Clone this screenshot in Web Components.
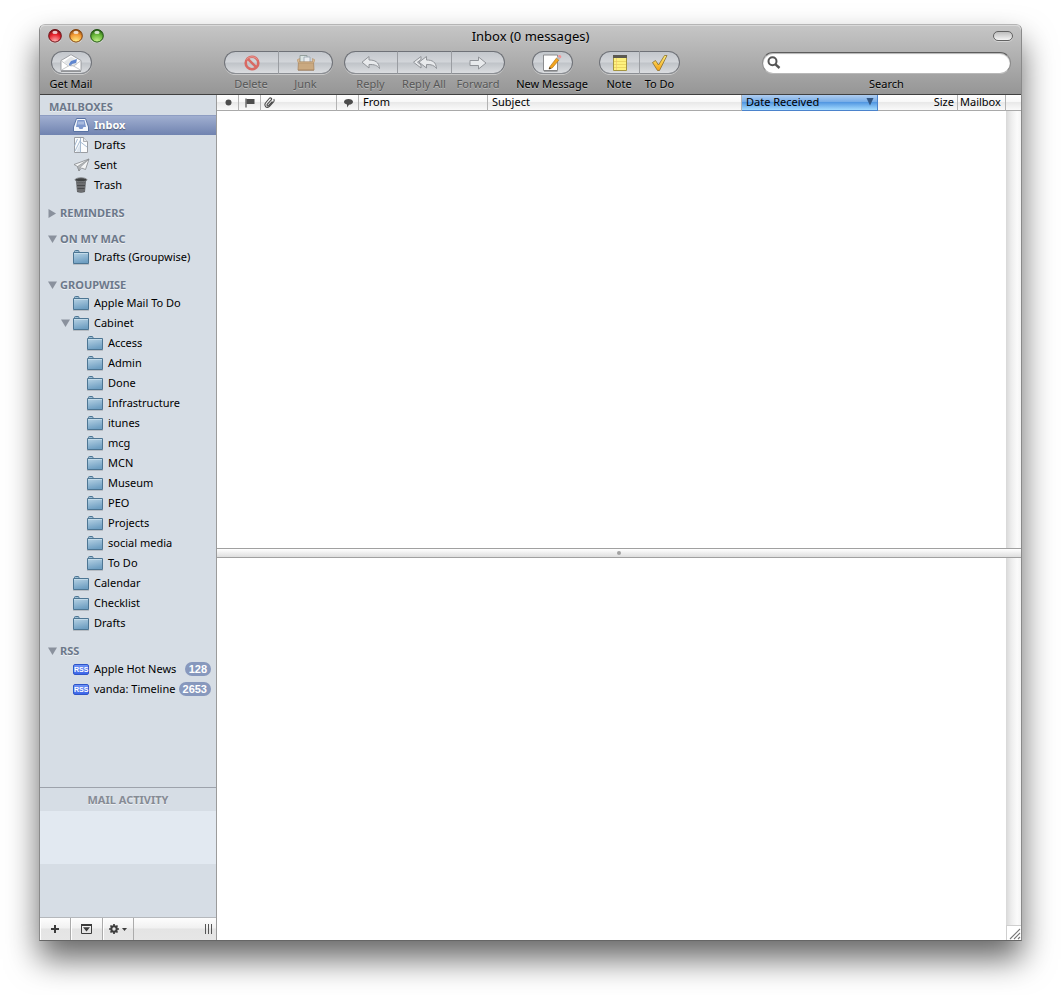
<!DOCTYPE html>
<html lang="en">
<head>
<meta charset="utf-8">
<meta name="viewport" content="width=device-width, initial-scale=1">
<title>Inbox (0 messages)</title>
<style>
  body { margin: 0; background: #fff; color: #000; font: 11px/20px "Noto Sans", "Open Sans", sans-serif; }
</style>
</head>
<body>
<mail-app></mail-app>

<script>
const folder = `<svg width="16" height="16" viewBox="0 0 16 16"><defs><linearGradient id="g" x1="0" y1="0" x2=".3" y2="1"><stop offset="0" stop-color="#b9d4e6"/><stop offset="1" stop-color="#6f9fc2"/></linearGradient></defs><path d="M0 15.5h16" stroke="#000" stroke-opacity=".14"/><path d="M1.500 3.500v-1q0-1 1-1h2.500q1 0 1 1v1" fill="#9dbfd6" stroke="#4c7593"/><path d="M.5 3.500h15v11H.5z" fill="url(#g)" stroke="#4c7593"/><path d="M1 4.500h14" stroke="#cfe2ee" stroke-opacity=".7"/></svg>`;
const light = (a, b, c) => `<svg width="14" height="14" viewBox="0 0 14 14"><defs><radialGradient id="r" cx=".5" cy=".95" r=".95"><stop offset="0" stop-color="${a}"/><stop offset=".6" stop-color="${b}"/><stop offset="1" stop-color="${c}"/></radialGradient></defs><path d="M1.500 11.500a7 6 0 0 0 11 0" stroke="#fff" stroke-opacity=".5" fill="none"/><circle cx="7" cy="6.800" r="6.300" fill="url(#r)" stroke="${c}" stroke-width="1"/><ellipse cx="7" cy="3.400" rx="2.600" ry="1.700" fill="#fff" fill-opacity=".75"/></svg>`;

const ICONS = {
  folder,
  close: light('#ffb8b8', '#e8222c', '#6b1015'),
  minimize: light('#fff08a', '#f39a35', '#80400c'),
  zoom: light('#c8f590', '#66b538', '#1e5210'),
  mail: `<svg width="22" height="18" viewBox="0 0 22 18"><path d="M1 17.300h20" stroke="#000" stroke-opacity=".4"/><path d="M1 6.500 10.500 1h1L21 6.500V16.500H1z" fill="#fff" stroke="#8e9196" stroke-width=".8"/><path d="M4 8 11 2.500 17 6v5l-6 2z" fill="#e4e6e8"/><path d="m9 10 2-3 6-2-1 4-4 1-1 2-2 0z" fill="#5f86cf"/><path d="M1.500 7 8.500 12 1.500 16M20.500 7l-7 5 7 4M8.500 12l2.500-1 2.500 1" fill="none" stroke="#b7babd" stroke-width=".8"/></svg>`,
  delete: `<svg width="16" height="16" viewBox="0 0 16 16"><g fill="none" stroke="#da6058" stroke-width="2.600"><circle cx="8" cy="8" r="6.300"/><path d="m3.800 3.800 8.400 8.400"/></g><path d="M2.500 4.500A6.800 6.800 0 0 1 13.500 4.500" fill="none" stroke="#ef9c98" stroke-width=".8"/></svg>`,
  junk: `<svg width="18" height="16" viewBox="0 0 18 16"><path d="M3 .5h7v8H3z" fill="#dfe9e6" stroke="#8f9b98"/><path d="M7 2h6v6H7z" fill="#eef1f3" stroke="#8fa0ab" stroke-width=".8"/><path d="M1.500 7h15l.5 8H1z" fill="#cba678" stroke="#a88257" stroke-width=".8"/><path d="M2.500 3.500 0 5l1.500 3h15L18 5l-2.500-1.500V7h-13z" fill="#ddb98a" stroke="#b08c60" stroke-width=".6"/><path d="M1 15.300h16" stroke="#8d6c49" stroke-opacity=".6"/></svg>`,
  reply: `<svg width="20" height="16" viewBox="0 0 20 16"><path d="M8 1.500v3.500c6 0 10 2 10.500 8.500-2-3-5-4.200-10.500-4v3.500L1 7.200z" fill="#eceef0" stroke="#8b8e93" stroke-linejoin="round"/></svg>`,
  replyall: `<svg width="26" height="16" viewBox="0 0 26 16"><g fill="#eceef0" stroke="#8b8e93" stroke-linejoin="round"><path d="M9 1.500 1.500 7.200 9 13v-3L5.500 7.200 9 4.500z"/><path d="M14.500 1.500v3.500c6 0 9.500 2 10 8.500-2-3-5-4.200-10-4v3.500L7 7.200z"/></g></svg>`,
  forward: `<svg width="18" height="16" viewBox="0 0 18 16"><path d="M1 5.500h8.500V2L17 8l-7.500 6v-3.500H1z" fill="#eceef0" stroke="#8b8e93" stroke-linejoin="round"/></svg>`,
  compose: `<svg width="20" height="18" viewBox="0 0 20 18"><path d="M1.500 1h14v15.500h-14z" fill="#fff" stroke="#8b8c8f"/><path d="M2 17.300h13.500" stroke="#000" stroke-opacity=".3"/><path d="M8 12.500 14.500 4l2.500 2-6.800 8L7 15z" fill="#f3a51e" stroke="#a86a12" stroke-width=".6"/><path d="m14.500 4 1.300-1.700 2.600 2L17 6z" fill="#b9bcc0"/><path d="m15.800 2.300.9-1q1-.8 2 .1t.5 1.900l-.8 1z" fill="#f58f93"/><path d="m7.700 13-.9 2.200 2.300-.7z" fill="#3b3025"/></svg>`,
  note: `<svg width="16" height="18" viewBox="0 0 16 18"><path d="M1.500 1.500h13v15h-13z" fill="#fdf27e" stroke="#a59540"/><path d="M1 1h14v3H1z" fill="#5c5a52"/><path d="M2 7.500h12M2 10.500h12M2 13.500h12" stroke="#ecd863"/><path d="M4.500 4v12" stroke="#f0c070" stroke-width=".6"/></svg>`,
  todo: `<svg width="18" height="18" viewBox="0 0 18 18"><defs><linearGradient id="t" x1="0" y1="0" x2="0" y2="1"><stop offset="0" stop-color="#fff07a"/><stop offset="1" stop-color="#f5a012"/></linearGradient></defs><path d="M1.500 8.500 4.500 6.500 7.500 11 13.500 1.500h2.500L8.500 16.500H6.500z" fill="url(#t)" stroke="#8a6d2c" stroke-width=".8" stroke-linejoin="round"/></svg>`,
  search: `<svg width="14" height="14" viewBox="0 0 14 14"><circle cx="5.500" cy="5.300" r="4" fill="none" stroke="#555" stroke-width="2"/><path d="m8.500 8.300 4 3.700" stroke="#555" stroke-width="2.400"/></svg>`,
  inbox: `<svg width="16" height="16" viewBox="0 0 16 16"><path d="M3.500 1.500h9L15.500 10v4.500H.5V10z" fill="#f4f7fc" stroke="#5872a3"/><path d="M4.500 3h7l1.500 7h-2.500L9.500 12h-3l-1-2H3z" fill="#7d97cc"/><path d="M5 4.500h6v3H4.500z" fill="#a9bbdf"/></svg>`,
  drafts: `<svg width="16" height="16" viewBox="0 0 16 16"><path d="M1.500.5h9l4 4v11h-13z" fill="#fbfcfd" stroke="#9a9da2"/><path d="M10.500.5v4h4" fill="#e4e7eb" stroke="#9a9da2" stroke-width=".8"/><path d="M7.500 6v9H3z" fill="#dde5ee"/><path d="M7.500 1v14.500M7.500 3 2 14M7.500 5l6.500 5M4.500 2l-3 7" fill="none" stroke="#9db3cd" stroke-width=".9"/></svg>`,
  sent: `<svg width="17" height="16" viewBox="0 0 17 16"><path d="M16 2 1 7.500 4.500 9.500 6 14l2.500-3 4 1.500z" fill="#f3f4f5" stroke="#85888c" stroke-width=".8" stroke-linejoin="round"/><path d="M16 2 4.500 9.500 6 14l1.500-4z" fill="#b7babd" stroke="#85888c" stroke-width=".6"/></svg>`,
  trash: `<svg width="16" height="16" viewBox="0 0 16 16"><path d="M3 3h10l-1 12q-4 1.500-8 0z" fill="#56585a"/><path d="M5 5.500v9M7 6v9M9 6v9M11 5.500v9" stroke="#8f9192" stroke-width=".8"/><path d="M4 8.500h8M4.500 11.500h7" stroke="#3a3b3c" stroke-width=".7"/><ellipse cx="8" cy="2.800" rx="6" ry="2" fill="#3f4142" stroke="#85878a" stroke-width=".9"/></svg>`,
  dot: `<svg width="7" height="7" viewBox="0 0 7 7"><circle cx="3.500" cy="3.500" r="3" fill="#4d4d4d"/></svg>`,
  flag: `<svg width="10" height="10" viewBox="0 0 10 10"><path d="M1 .5v9" stroke="#4d4d4d" stroke-width="1.200"/><path d="M1.500 1h8v5h-8z" fill="#4d4d4d"/></svg>`,
  clip: `<svg width="11" height="12" viewBox="0 0 11 12"><path d="m8.500 4.500-3.800 4q-.9.700-1.400.2-.6-.6.100-1.500L7.200 3q1-1 0-1.800t-2 .3L1.500 6Q.2 8 1.600 9.600t3.700 0L9.500 5q1.200-1.800.2-2.900" fill="none" stroke="#4d4d4d" stroke-width="1.100"/></svg>`,
  bubble: `<svg width="9" height="10" viewBox="0 0 9 10"><path d="M4.500 1C7 1 9 2.100 9 3.800S7.300 6.600 5 6.700L3 9.500V6.500C1.200 6.200 0 5.200 0 3.800 0 2.100 2 1 4.500 1z" fill="#4d4d4d"/></svg>`,
  sort: `<svg width="8" height="8" viewBox="0 0 8 8"><path d="M.5 0h7L4 7.500z" fill="#335682"/></svg>`,
  open: `<svg width="9" height="8" viewBox="0 0 9 8"><path d="M0 .5h9L4.500 8z" fill="#8a919d"/></svg>`,
  shut: `<svg width="9" height="9" viewBox="0 0 9 9"><path d="M.5 0v9L8 4.500z" fill="#8a919d"/></svg>`,
  add: `<svg width="8" height="8" viewBox="0 0 8 8"><path d="M4 0v8M0 4h8" stroke="#3c3c3c" stroke-width="2"/></svg>`,
  panel: `<svg width="11" height="10" viewBox="0 0 11 10"><path d="M.5.500h10v9H.5z" fill="none" stroke="#3c3c3c"/><path d="M0 0h11v2H0z" fill="#3c3c3c"/><path d="M2 3.200h7L5.500 7.500z" fill="#3c3c3c"/></svg>`,
  gear: `<svg width="18" height="10" viewBox="0 0 18 10"><circle cx="5" cy="5" r="2.700" fill="none" stroke="#3c3c3c" stroke-width="2"/><path d="M5 0v2M5 8v2M0 5h2M8 5h2M1.500 1.500l1.300 1.300M7.200 7.200l1.300 1.300M8.500 1.500 7.200 2.800M2.800 7.200 1.500 8.500" stroke="#3c3c3c" stroke-width="1.700"/><path d="M13 4h5l-2.500 3z" fill="#3c3c3c"/></svg>`,
  grip: `<svg width="7" height="10" viewBox="0 0 7 10"><path d="M.5 0v10M3.500 0v10M6.500 0v10" stroke="#555"/></svg>`,
  corner: `<svg width="12" height="12" viewBox="0 0 12 12"><path d="M1 11 11 1M5 11l6-6M9 11l2-2" stroke="#777" stroke-width="1.100"/></svg>`
};

class Base extends HTMLElement {
  connectedCallback() {
    if (this.shadowRoot) return;
    this.attachShadow({ mode: 'open' }).innerHTML = `<style>
      :host, * { box-sizing: border-box; }
      button, input { font: inherit; color: inherit; margin: 0; padding: 0; border: 0; background: none; }
      button { display: block; }
    </style>` + this.render();
  }
  attr(name, fallback = '') { return this.getAttribute(name) ?? fallback; }
}

customElements.define('ui-icon', class extends Base {
  render() {
    return `<style>:host { display: inline-flex; flex: none; } svg { display: block; }</style>${ICONS[this.attr('name')]}`;
  }
});

/* One segment of a toolbar capsule, with its caption underneath. */
customElements.define('tool-button', class extends Base {
  render() {
    const off = this.hasAttribute('disabled');
    return `<style>
      :host { display: block; }
      button { width: 100%; display: flex; flex-direction: column; align-items: center; white-space: nowrap; }
      .face { display: flex; align-items: center; justify-content: center; height: 23px; width: var(--seg, 41px);
        border: solid #6f7278; border-width: 1px 0; border-bottom-color: #8b8e93;
        background: linear-gradient(#c3c7cc, #d3d6da 48%, #bfc3c8 52%, #dbdde0); box-shadow: 0 1px 0 rgba(255,255,255,.4); }
      :host([edge=start]) .face { border-left-width: 1px; border-radius: 12px 0 0 12px; }
      :host([edge=end]) .face { border-right-width: 1px; border-radius: 0 12px 12px 0; }
      :host([edge=both]) .face { border-width: 1px; border-radius: 12px; }
      :host([edge=mid]) .face, :host([edge=end]) .face { border-left: 1px solid #9a9da2; width: calc(var(--seg) + 1px); }
      .text { line-height: 19px; text-shadow: 0 1px 0 rgba(255,255,255,.3); }
      button:disabled .text { color: #575757; }
      button:disabled ui-icon { opacity: .9; }
    </style>
    <button type="button" ${off ? 'disabled' : ''}><span class="face"><ui-icon name="${this.attr('icon')}"></ui-icon></span><span class="text">${this.attr('label')}</span></button>`;
  }
});

customElements.define('tool-group', class extends Base {
  render() { return `<style>:host { display: flex; flex: none; }</style><slot></slot>`; }
});

customElements.define('search-field', class extends Base {
  render() {
    return `<style>
      :host { display: flex; flex-direction: column; align-items: center; width: 249px; padding-top: 1px; }
      .box { width: 100%; height: 22px; display: flex; align-items: center; padding: 0 8px 0 4px; background: #fff;
        border: 1px solid #8a8a8a; border-top-color: #5c5c5c; border-bottom-color: #b9b9b9; border-radius: 11px;
        box-shadow: inset 0 1px 1px rgba(0,0,0,.3); }
      input { flex: 1; min-width: 0; height: 18px; margin-left: 4px; outline: 0; appearance: none; }
      label { line-height: 19px; text-shadow: 0 1px 0 rgba(255,255,255,.3); }
    </style>
    <div class="box"><ui-icon name="search"></ui-icon><input id="q" type="search"></div><label for="q">Search</label>`;
  }
});

customElements.define('mail-toolbar', class extends Base {
  render() {
    return `<style>
      :host { display: block; height: 70px; border-bottom: 1px solid #404040; background: linear-gradient(#c6c6c6, #969696); border-radius: 5px 5px 0 0; box-shadow: inset 0 1px 0 #dadada; }
      .title { display: grid; grid-template-columns: 1fr auto 1fr; align-items: center; height: 22px; padding: 0 8px; }
      .lights { display: flex; gap: 7px; }
      .lights button { display: flex; }
      h1 { margin: 0; font-size: 13px; font-weight: 400; line-height: 22px; text-shadow: 0 1px 0 rgba(255,255,255,.3); }
      .pill { justify-self: end; width: 20px; height: 10px; border: 1px solid #626262; border-radius: 5px; background: linear-gradient(#bdbdbd, #f4f4f4); box-shadow: 0 1px 0 rgba(255,255,255,.4); }
      .tools { display: flex; align-items: flex-start; gap: 11px; padding: 4px 10px 0 9px; }
      .get { width: 44px; margin-right: 120px; }
      .new { width: 72px; }
      search-field { margin-left: auto; }
    </style>
    <div class="title">
      <div class="lights"><button type="button" aria-label="Close"><ui-icon name="close"></ui-icon></button><button type="button" aria-label="Minimize"><ui-icon name="minimize"></ui-icon></button><button type="button" aria-label="Zoom"><ui-icon name="zoom"></ui-icon></button></div>
      <h1>Inbox (0 messages)</h1>
      <button class="pill" type="button" aria-label="Toggle toolbar"></button>
    </div>
    <div class="tools">
      <tool-button class="get" edge="both" icon="mail" label="Get Mail"></tool-button>
      <tool-group style="--seg:54px">
        <tool-button edge="start" icon="delete" label="Delete" disabled></tool-button>
        <tool-button edge="end" icon="junk" label="Junk" disabled></tool-button>
      </tool-group>
      <tool-group style="--seg:53px">
        <tool-button edge="start" icon="reply" label="Reply" disabled></tool-button>
        <tool-button edge="mid" icon="replyall" label="Reply All" disabled></tool-button>
        <tool-button edge="end" icon="forward" label="Forward" disabled></tool-button>
      </tool-group>
      <tool-button class="new" edge="both" icon="compose" label="New Message"></tool-button>
      <tool-group style="--seg:40px">
        <tool-button edge="start" icon="note" label="Note"></tool-button>
        <tool-button edge="end" icon="todo" label="To Do"></tool-button>
      </tool-group>
      <search-field></search-field>
    </div>`;
  }
});

customElements.define('mailbox-group', class extends Base {
  render() {
    const state = this.attr('state');
    return `<style>
      :host { display: block; }
      button { width: 100%; height: 18px; display: flex; align-items: center; padding: 2px 0 0 8px; text-align: left;
        font-weight: 700; line-height: 16px; color: #6c788a; text-shadow: 0 1px 0 rgba(255,255,255,.6); }
      ui-icon { width: 12px; }
      .plain { padding-left: 9px; }
    </style>
    <button type="button" class="${state ? '' : 'plain'}" ${state ? `aria-expanded="${state === 'open'}"` : ''}>${state ? `<ui-icon name="${state}"></ui-icon>` : ''}<span>${this.attr('label')}</span></button><slot></slot>`;
  }
});

customElements.define('mailbox-row', class extends Base {
  render() {
    const icon = this.attr('icon', 'folder');
    const count = this.attr('count');
    return `<style>
      :host { display: block; }
      button { width: 100%; height: 20px; display: flex; align-items: center; padding: 0 5px 0 21px; text-align: left; white-space: nowrap; }
      :host([nested]) button { padding-left: 35px; }
      .twist { width: 12px; flex: none; display: flex; }
      .pic { width: 21px; flex: none; display: flex; }
      :host([selected]) button { color: #fff; font-weight: 700; background: linear-gradient(#a3b1d2, #7083b0); box-shadow: inset 0 1px 0 #8e9dc2; text-shadow: 0 1px 1px rgba(0,0,0,.4); }
      .rss { width: 16px; height: 11px; border: 1px solid #2f55c8; border-radius: 2px; background: linear-gradient(#6f92f5, #3d66e8); color: #fff; font: 700 7px/9px "Liberation Sans", sans-serif; text-align: center; }
      .count { margin-left: auto; padding: 0 4px; border-radius: 7px; background: #8798bd; color: #fff; font: 700 11px/14px "Liberation Sans", sans-serif; }
    </style>
    <button type="button"><span class="twist">${this.hasAttribute('open') ? '<ui-icon name="open"></ui-icon>' : ''}</span><span class="pic">${icon === 'rss' ? '<span class="rss">RSS</span>' : `<ui-icon name="${icon}"></ui-icon>`}</span><span>${this.attr('label')}</span>${count ? `<span class="count">${count}</span>` : ''}</button>`;
  }
});

customElements.define('mail-activity', class extends Base {
  render() {
    return `<style>
      :host { display: block; height: 130px; border-top: 1px solid #9da2ab; }
      h2 { margin: 0; height: 23px; font-size: 11px; font-weight: 700; line-height: 24px; text-align: center; color: #868b95; text-shadow: 0 1px 0 rgba(255,255,255,.6); }
      div { height: 53px; background: #e2e9f1; }
    </style><h2>MAIL ACTIVITY</h2><div></div>`;
  }
});

customElements.define('sidebar-actions', class extends Base {
  render() {
    return `<style>
      :host { display: flex; height: 23px; border-top: 1px solid #b5b8bc; background: linear-gradient(#fdfdfd, #f1f1f1 45%, #e4e4e4 50%, #e6e6e6); }
      button { width: 31px; display: flex; align-items: center; justify-content: center; border-right: 1px solid #ababab; box-shadow: inset 1px 0 0 #fff; }
      button:nth-of-type(2) { width: 32px; }
      ui-icon.grip { margin: auto 4px auto auto; }
    </style>
    <button type="button" aria-label="Add mailbox"><ui-icon name="add"></ui-icon></button><button type="button" aria-label="Toggle activity"><ui-icon name="panel"></ui-icon></button><button type="button" aria-label="Actions"><ui-icon name="gear"></ui-icon></button><ui-icon class="grip" name="grip"></ui-icon>`;
  }
});

customElements.define('mail-sidebar', class extends Base {
  render() {
    const nested = ['Access', 'Admin', 'Done', 'Infrastructure', 'itunes', 'mcg', 'MCN', 'Museum', 'PEO', 'Projects', 'social media', 'To Do']
      .map(n => `<mailbox-row nested label="${n}"></mailbox-row>`).join('');
    return `<style>
      :host { display: flex; flex-direction: column; flex: none; width: 177px; border-right: 1px solid #9b9b9b; background: #d6dde5; }
      nav { flex: 1; display: flex; flex-direction: column; gap: 8px; padding: 2px 0 8px; }
    </style>
    <nav aria-label="Mailboxes">
      <mailbox-group label="MAILBOXES">
        <mailbox-row selected icon="inbox" label="Inbox"></mailbox-row>
        <mailbox-row icon="drafts" label="Drafts"></mailbox-row>
        <mailbox-row icon="sent" label="Sent"></mailbox-row>
        <mailbox-row icon="trash" label="Trash"></mailbox-row>
      </mailbox-group>
      <mailbox-group state="shut" label="REMINDERS"></mailbox-group>
      <mailbox-group state="open" label="ON MY MAC"><mailbox-row label="Drafts (Groupwise)"></mailbox-row></mailbox-group>
      <mailbox-group state="open" label="GROUPWISE">
        <mailbox-row label="Apple Mail To Do"></mailbox-row>
        <mailbox-row open label="Cabinet"></mailbox-row>
        ${nested}
        <mailbox-row label="Calendar"></mailbox-row>
        <mailbox-row label="Checklist"></mailbox-row>
        <mailbox-row label="Drafts"></mailbox-row>
      </mailbox-group>
      <mailbox-group state="open" label="RSS">
        <mailbox-row icon="rss" label="Apple Hot News" count="128"></mailbox-row>
        <mailbox-row icon="rss" label="vanda: Timeline" count="2653"></mailbox-row>
      </mailbox-group>
    </nav>
    <mail-activity></mail-activity>
    <sidebar-actions></sidebar-actions>`;
  }
});

customElements.define('scroll-track', class extends Base {
  render() {
    return `<style>
      :host { display: flex; flex-direction: column; flex: none; width: 15px; }
      .track { flex: 1; background: linear-gradient(90deg, #d8d8d8, #ededed 35%, #fbfbfb 75%, #f4f4f4); }
      .corner { height: 15px; display: flex; align-items: flex-end; justify-content: flex-end; border: solid #cfcfcf; border-width: 1px 0 0 1px; background: #fff; }
    </style><div class="track"></div>${this.hasAttribute('corner') ? '<div class="corner"><ui-icon name="corner"></ui-icon></div>' : ''}`;
  }
});

customElements.define('message-list', class extends Base {
  render() {
    return `<style>
      :host { display: flex; flex-direction: column; }
      table { width: 100%; table-layout: fixed; border-collapse: separate; border-spacing: 0; }
      th { height: 16px; padding: 0 3px 2px 4px; border-right: 1px solid #b3b3b3; border-bottom: 1px solid #a9a9a9; font-weight: 400; line-height: 13px; text-align: left; white-space: nowrap;
        background: linear-gradient(#fff, #f8f8f8 45%, #e9e9e9 50%, #fafafa); }
      th:last-child { border-right: 0; }
      th.pic { padding: 0; }
      th.pic div { display: flex; height: 15px; align-items: center; justify-content: center; padding-left: 1px; }
      th.pic.left div { justify-content: flex-start; padding-left: 3px; }
      th.num { text-align: right; }
      th.sorted { background: linear-gradient(#b0cdf0, #78aee8 45%, #5398e2 50%, #a5dcff); border-right-color: #4b83cc; border-bottom-color: #4b83cc; }
      th.sorted div { display: flex; align-items: center; justify-content: space-between; }
      .body { flex: 1; display: flex; justify-content: flex-end; }
    </style>
    <table>
      <colgroup><col style="width:22px"><col style="width:22px"><col style="width:76px"><col style="width:22px"><col style="width:129px"><col><col style="width:136px"><col style="width:80px"><col style="width:48px"><col style="width:15px"></colgroup>
      <thead><tr>
        <th class="pic" aria-label="Status"><div><ui-icon name="dot"></ui-icon></div></th>
        <th class="pic" aria-label="Flag"><div><ui-icon name="flag"></ui-icon></div></th>
        <th class="pic left" aria-label="Attachments"><div><ui-icon name="clip"></ui-icon></div></th>
        <th class="pic" aria-label="Chat"><div><ui-icon name="bubble"></ui-icon></div></th>
        <th>From</th><th>Subject</th>
        <th class="sorted" aria-sort="descending"><div>Date Received<ui-icon name="sort"></ui-icon></div></th>
        <th class="num">Size</th><th style="padding-left:2px;padding-right:2px">Mailbox</th><th aria-label="Scroll"></th>
      </tr></thead>
    </table>
    <div class="body"><scroll-track></scroll-track></div>`;
  }
});

customElements.define('mail-app', class extends Base {
  render() {
    return `<style>
      :host { display: flex; min-height: 100vh; padding: 24px 39px 54px; }
      .window { flex: 1; min-width: 0; display: flex; flex-direction: column; border: 1px solid #8a8a8a; border-top-color: #b5b5b5; border-bottom-color: #666;
        border-radius: 6px 6px 0 0; background: #fff; box-shadow: 0 18px 32px rgba(0,0,0,.6); }
      .content { flex: 1; display: flex; }
      main { flex: 1; min-width: 0; display: flex; flex-direction: column; }
      message-list { flex: 453 1 0; }
      .split { flex: none; height: 10px; display: flex; align-items: center; justify-content: center; border: solid #a0a0a0; border-width: 1px 0; background: linear-gradient(#fff, #dedede); }
      .split::after { content: ""; width: 4px; height: 4px; border-radius: 50%; background: #a2a2a2; }
      .preview { flex: 382 1 0; display: flex; justify-content: flex-end; }
    </style>
    <div class="window">
      <mail-toolbar></mail-toolbar>
      <div class="content">
        <mail-sidebar></mail-sidebar>
        <main><message-list></message-list><div class="split" role="separator"></div><section class="preview" aria-label="Message"><scroll-track corner></scroll-track></section></main>
      </div>
    </div>`;
  }
});
</script>
</body>
</html>
